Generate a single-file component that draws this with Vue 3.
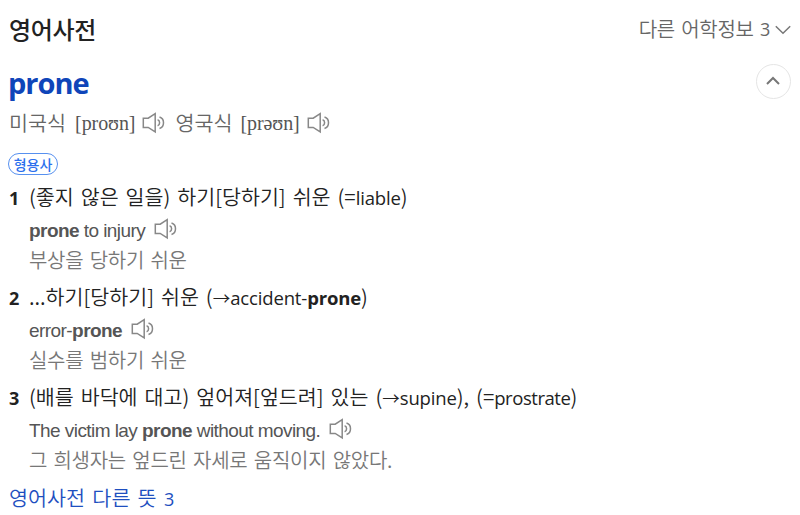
<script setup>
import { h } from 'vue'

const Speaker = () =>
  h('svg', { class: 'speaker', width: 24, height: 22, viewBox: '0 0 24 22', fill: 'none', stroke: '#888', 'stroke-width': 1.5 }, [
    h('path', { d: 'M1.3 6.2H6.2L13.2 1.6V19.8L6.2 15.4H1.3Z' }),
    h('path', { d: 'M15.6 7.8Q17.6 8.3 17.6 10.7T15.6 13.7' }),
    h('path', { d: 'M17.5 5Q21.5 6.2 21.5 10.7T17.5 16.5' }),
  ])

const entries = [
  {
    def: [['k', '(좋지 않은 일을) 하기[당하기] 쉬운 (='], ['l', 'liable'], ['k', ')']],
    example: [['b', 'prone'], ['', ' to injury']],
    translation: '부상을 당하기 쉬운',
  },
  {
    def: [['k', '...하기[당하기] 쉬운 ('], ['arrow', '→'], ['l', 'accident-'], ['l bold', 'prone'], ['k', ')']],
    example: [['', 'error-'], ['b', 'prone']],
    translation: '실수를 범하기 쉬운',
  },
  {
    def: [['k', '(배를 바닥에 대고) 엎어져[엎드려] 있는 ('], ['arrow', '→'], ['l', 'supine'], ['k', '), (='], ['l narrow', 'prostrate'], ['k', ')']],
    example: [['', 'The victim lay '], ['b', 'prone'], ['', ' without moving.']],
    translation: '그 희생자는 엎드린 자세로 움직이지 않았다.',
  },
]
</script>

<template>
  <main class="dict">
    <header class="top">
      <h2 class="title">영어사전</h2>
      <a class="more">다른 어학정보 <span class="num">3</span>
        <svg width="16" height="10" viewBox="0 0 16 10" fill="none" stroke="#777" stroke-width="1.5"><path d="M.8 1.2 8 8.2 15.2 1.2" /></svg>
      </a>
    </header>
    <div class="head">
      <h1 class="word">prone</h1>
      <button class="fold">
        <svg width="14" height="10" viewBox="0 0 14 10" fill="none" stroke="#777" stroke-width="2"><path d="M1 8 7 2 13 8" /></svg>
      </button>
    </div>
    <div class="pron">
      <span class="label">미국식</span><span class="ipa us">[proʊn]</span><Speaker />
      <span class="label uk-label">영국식</span><span class="ipa uk">[prəʊn]</span><Speaker />
    </div>
    <div class="pos-row"><span class="pos">형용사</span></div>
    <ol class="list">
      <li v-for="(e, i) in entries" :key="i" class="entry">
        <span class="index">{{ i + 1 }}</span>
        <div>
          <p class="def"><span v-for="(s, j) in e.def" :key="j" :class="s[0]">{{ s[1] }}</span></p>
          <p class="example"><span><span v-for="(s, j) in e.example" :key="j" :class="s[0]">{{ s[1] }}</span></span><Speaker /></p>
          <p class="translation">{{ e.translation }}</p>
        </div>
      </li>
    </ol>
    <a class="others">영어사전 다른 뜻 <span class="num">3</span></a>
  </main>
</template>

<style>
body { background: #fff; }
</style>

<style scoped>
.dict {
  box-sizing: border-box;
  width: 800px;
  height: 515px;
  padding: 10px 9px 0;
  overflow: hidden;
  color: #222;
  font: 350 20px/30px "Noto Sans CJK KR", sans-serif;
  word-spacing: 2.2px;
}
h1, h2, p, ol { margin: 0; padding: 0; }
.top, .head { display: flex; justify-content: space-between; }
.top { height: 40px; }
.title { font-size: 24px; font-weight: 500; line-height: 38px; letter-spacing: -0.3px; }
.more { display: flex; align-items: center; height: 37px; color: #666; white-space: pre; letter-spacing: -0.3px; }
.more svg { margin: 3px 0 0 5px; }
.num { font-family: "Open Sans", sans-serif; font-weight: 400; font-size: 18px; }
.head { height: 56px; }
.word { color: #0f45b9; font: 700 29px/66px "Open Sans", sans-serif; letter-spacing: -1px; margin-left: -1px; }
.fold {
  box-sizing: border-box;
  display: flex;
  align-items: center;
  justify-content: center;
  width: 35px;
  height: 35px;
  margin-top: 14px;
  padding: 0;
  border: 1px solid #e5e5e5;
  border-radius: 50%;
  background: #fff;
}
.fold svg { margin-top: -2px; margin-right: 1px; }
.pron { display: flex; align-items: center; height: 34px; color: #666; }
.label { font-size: 20.7px; line-height: 32px; margin-top: -2px; }
.ipa { margin: 0 7px 0 9px; color: #555; font-family: "Liberation Serif", serif; font-size: 20px; font-weight: 400; letter-spacing: -0.1px; }
.uk { margin: 0 7px 0 8px; }
.uk-label { margin-left: 9px; }
.speaker { flex: none; display: block; }
.pos-row { display: flex; height: 41px; margin-left: -1px; align-items: center; padding-top: 7px; box-sizing: border-box; }
.pos {
  box-sizing: border-box;
  width: 50px;
  height: 22px;
  border: 1px solid #5790ef;
  border-radius: 11px;
  color: #2b70ed;
  font-size: 14px;
  font-weight: 500;
  line-height: 20px;
  text-align: center;
}
.list { list-style: none; }
.entry { display: flex; height: 100px; }
.index { width: 20px; font: 700 18px/34px "Open Sans", sans-serif; }
.def { height: 34px; font-size: 20.6px; line-height: 30px; white-space: pre; word-spacing: 2.4px; }
.l { font-family: "Open Sans", sans-serif; font-size: 18.5px; font-weight: 400; letter-spacing: -0.15px; }
.narrow { letter-spacing: -0.45px; }
.bold { font-weight: 700; }
.arrow { font-size: 17.5px; }
.example { display: flex; align-items: center; height: 30px; color: #555; font: 400 19px/30px "Liberation Sans", sans-serif; letter-spacing: -0.56px; word-spacing: 0; white-space: pre; }
.example > span { padding-top: 1px; }
.example .speaker { margin: -2px 0 0 9px; }
.b { font-weight: 700; }
.translation { color: #777; line-height: 30px; letter-spacing: -0.28px; white-space: pre; }
.others { display: block; color: #1e4fc0; font-size: 20.7px; line-height: 36px; margin-top: -2px; white-space: pre; word-spacing: 2.6px; }
</style>
